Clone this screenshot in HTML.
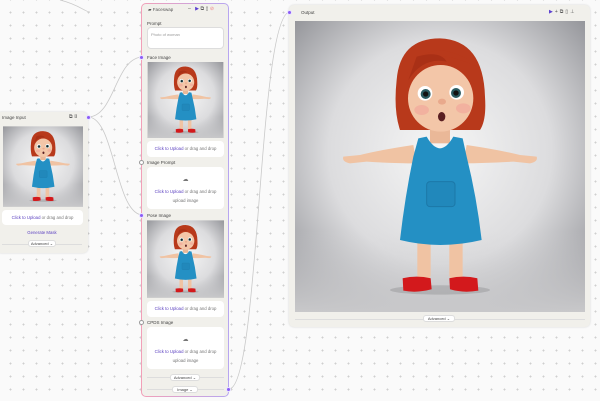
<!DOCTYPE html>
<html><head><meta charset="utf-8"><style>
*{box-sizing:border-box;margin:0;padding:0}
body{width:600px;height:401px;overflow:hidden;position:relative;font-family:"Liberation Sans",sans-serif;background:#fafafa;background-image:radial-gradient(circle,#cfcfcf 0.8px,transparent 1.1px);background-size:13px 13px;background-position:4px 6px}
.node{position:absolute;background:#f1f0eb;border-radius:5px;box-shadow:0 0 2px rgba(0,0,0,.15)}
.lbl{position:absolute;font-size:4.5px;color:#444}
.box{position:absolute;background:#fff;border-radius:4px}
.up{position:absolute;width:100%;text-align:center;font-size:4.3px;color:#777}
.up b{color:#5a3fc0;font-weight:normal}
.pill{position:absolute;background:#fff;border:0.5px solid #ddd;border-radius:3px;font-size:4px;color:#444;text-align:center;line-height:6px;height:7px}
.line{position:absolute;height:0.5px;background:#ddd}
.dot{position:absolute;width:5px;height:5px;border-radius:50%;background:#8b5cf6;border:1px solid #e9e3ff}
.dot.o{background:#fff;border:0.7px solid #999}
.ic{position:absolute;font-size:5px;color:#555}
</style></head><body>
<svg width="0" height="0" style="position:absolute">
<defs>
<radialGradient id="bg" cx="0.5" cy="0.45" r="0.7"><stop offset="0" stop-color="#f6f6f6"/><stop offset="0.55" stop-color="#dcdcde"/><stop offset="1" stop-color="#8e8f94"/></radialGradient>
<linearGradient id="fl" x1="0" y1="0" x2="0" y2="1"><stop offset="0" stop-color="#d8d8da" stop-opacity="0"/><stop offset="1" stop-color="#c8c8ca"/></linearGradient>
<symbol id="pic" viewBox="0 0 290 291">
<rect width="290" height="291" fill="url(#bg)"/>
<rect y="210" width="290" height="81" fill="url(#fl)"/>
<g transform="translate(35,9) scale(0.3333)">
<ellipse cx="330" cy="780" rx="150" ry="14" fill="#000" opacity=".12"/>
<path d="M250 345 Q150 360 90 375 L40 380 Q35 395 60 400 L110 395 Q190 400 260 400Z" fill="#f0c3a3"/>
<path d="M410 345 Q510 360 570 375 L620 380 Q625 395 600 400 L550 395 Q470 400 400 400Z" fill="#f0c3a3"/>
<rect x="262" y="620" width="40" height="130" rx="15" fill="#f0c3a3"/>
<rect x="358" y="620" width="40" height="130" rx="15" fill="#f0c3a3"/>
<path d="M218 745 Q260 735 302 745 L305 778 Q260 790 220 782Z" fill="#d3191c"/>
<path d="M358 745 Q400 735 442 745 L445 782 Q400 790 360 778Z" fill="#d3191c"/>
<rect x="300" y="270" width="60" height="70" fill="#eab898"/>
<path d="M265 325 L290 320 Q330 390 370 320 L398 325 L410 380 Q440 500 455 630 Q330 660 210 630 Q225 500 250 380Z" fill="#2490c4"/>
<rect x="290" y="455" width="85" height="75" rx="10" fill="#2188bb" stroke="#1c78a8" stroke-width="3"/>
<path d="M200 150 Q210 25 330 25 Q460 30 465 200 Q470 270 450 300 L210 300 Q190 240 200 150Z" fill="#b8391b"/>
<ellipse cx="332" cy="205" rx="98" ry="100" fill="#f3c6a8"/>
<ellipse cx="275" cy="240" rx="22" ry="15" fill="#f2a39a" opacity=".6"/>
<ellipse cx="400" cy="235" rx="22" ry="15" fill="#f2a39a" opacity=".6"/>
<path d="M230 130 Q300 40 440 110 Q400 70 330 60 Q250 70 230 130Z" fill="#b8391b"/>
<path d="M235 150 Q280 80 350 95 Q330 60 260 80Z" fill="#a93016"/>
<circle cx="285" cy="190" r="22" fill="#fff"/><circle cx="380" cy="187" r="22" fill="#fff"/>
<circle cx="287" cy="192" r="15" fill="#2a5a60"/><circle cx="378" cy="189" r="15" fill="#2a5a60"/>
<circle cx="287" cy="192" r="8" fill="#111"/><circle cx="378" cy="189" r="8" fill="#111"/>
<ellipse cx="336" cy="215" rx="12" ry="9" fill="#e9a98c"/>
<ellipse cx="335" cy="260" rx="11" ry="14" fill="#5a1f22"/>
</g>
</symbol>
</defs></svg>

<!-- connection lines -->
<svg style="position:absolute;left:0;top:0" width="600" height="401">
<g fill="none" stroke="#c9c9c9" stroke-width="0.8">
<path d="M88 117 C115 117 115 57 143 57"/>
<path d="M88 117 C115 117 115 215 143 215"/>
<path d="M60 0 C80 5 85 12 90 12"/>
<path d="M229 389 C260 389 258 12 290 12"/>
</g></svg>

<!-- left node -->
<div class="node" style="left:-4px;top:112px;width:92px;height:141px">
<div class="lbl" style="left:6px;top:3px">Image Input</div>
<div class="ic" style="left:73px;top:2px">⧉ ▯</div>
<svg style="position:absolute;left:7px;top:14px" width="80" height="81"><use href="#pic" width="80" height="81"/></svg>
<div class="box" style="left:6px;top:98px;width:81px;height:15px"><div class="up" style="top:5px"><b>Click to Upload</b> or drag and drop</div></div>
<div class="up" style="top:118px;color:#5a3fc0">Generate Mask</div>
<div class="line" style="left:6px;top:132px;width:80px"></div>
<div class="pill" style="left:32px;top:128px;width:28px">Advanced ⌄</div>
</div>
<div class="dot" style="left:86px;top:115px"></div>

<!-- middle node -->
<div style="position:absolute;left:141px;top:3px;width:88px;height:394px;border-radius:5px;background:linear-gradient(90deg,#f2a0b8,#b7a6f0);padding:1px">
<div style="position:relative;width:100%;height:100%;background:#f1f0eb;border-radius:4px">
<div class="lbl" style="left:6px;top:3px;color:#555">▰ Faceswap</div>
<div class="ic" style="left:46px;top:2px;letter-spacing:1.5px">– <span style="color:#5b3fd0">▶</span>⧉▯<span style="color:#e88">⊘</span></div>
<div class="lbl" style="left:5px;top:17px">Prompt</div>
<div class="box" style="left:5px;top:23px;width:77px;height:22px;border:0.5px solid #ddd"><div style="font-size:4px;color:#999;margin:4px 3px">Photo of woman</div></div>
<div class="lbl" style="left:5px;top:51px">Face Image</div>
<svg style="position:absolute;left:5px;top:58px" width="77" height="76"><use href="#pic" width="77" height="76"/></svg>
<div class="box" style="left:5px;top:137px;width:77px;height:16px"><div class="up" style="top:5px"><b>Click to Upload</b> or drag and drop</div></div>
<div class="lbl" style="left:5px;top:156px">Image Prompt</div>
<div class="box" style="left:5px;top:163px;width:77px;height:42px"><div class="up" style="top:9px;font-size:6px">☁</div><div class="up" style="top:22px"><b>Click to Upload</b> or drag and drop</div><div class="up" style="top:31px">upload image</div></div>
<div class="lbl" style="left:5px;top:209px">Pose Image</div>
<svg style="position:absolute;left:5px;top:216px" width="77" height="78"><use href="#pic" width="77" height="78"/></svg>
<div class="box" style="left:5px;top:297px;width:77px;height:16px"><div class="up" style="top:5px"><b>Click to Upload</b> or drag and drop</div></div>
<div class="lbl" style="left:5px;top:316px">CPDS Image</div>
<div class="box" style="left:5px;top:323px;width:77px;height:42px"><div class="up" style="top:9px;font-size:6px">☁</div><div class="up" style="top:22px"><b>Click to Upload</b> or drag and drop</div><div class="up" style="top:31px">upload image</div></div>
<div class="line" style="left:5px;top:373px;width:77px"></div>
<div class="pill" style="left:28px;top:370px;width:30px">Advanced ⌄</div>
<div class="line" style="left:5px;top:385px;width:77px"></div>
<div class="pill" style="left:30px;top:382px;width:26px">Image ⌄</div>
</div></div>
<div class="dot" style="left:139px;top:55px"></div>
<div class="dot o" style="left:139px;top:160px"></div>
<div class="dot" style="left:139px;top:213px"></div>
<div class="dot o" style="left:139px;top:320px"></div>
<div class="dot" style="left:226px;top:387px"></div>

<!-- output node -->
<div class="node" style="left:289px;top:5px;width:301px;height:322px">
<div class="lbl" style="left:12px;top:5px">Output</div>
<div class="ic" style="left:260px;top:4px;letter-spacing:2px"><span style="color:#5b3fd0">▶</span>+⧉▯⊥</div>
<svg style="position:absolute;left:6px;top:16px" width="290" height="291"><use href="#pic" width="290" height="291"/></svg>
<div class="line" style="left:6px;top:314px;width:290px"></div>
<div class="pill" style="left:134px;top:310px;width:32px">Advanced ⌄</div>
</div>
<div class="dot" style="left:287px;top:10px"></div>
</body></html>
